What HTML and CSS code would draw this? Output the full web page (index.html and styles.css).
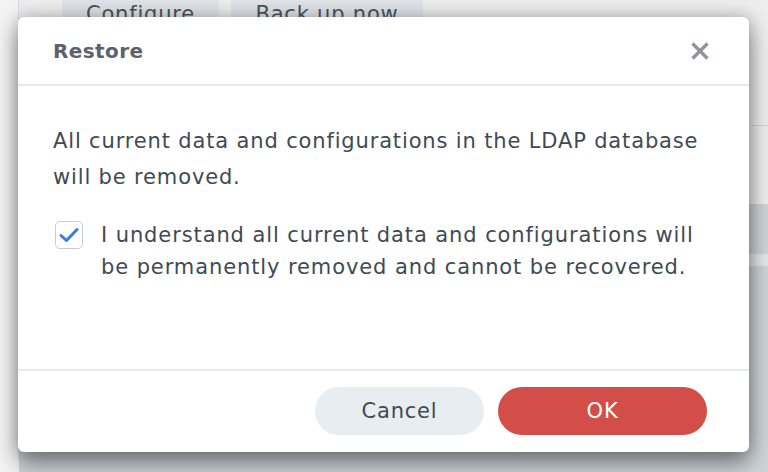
FILE: index.html
```html
<!DOCTYPE html>
<html>
<head>
<meta charset="utf-8">
<link rel="stylesheet" href="styles.css">
</head>
<body>
<div class="page">
  <div class="toolbar">
    <span class="tb-btn tb-configure">Configure</span>
    <span class="tb-btn tb-backup">Back up now</span>
  </div>
  <div class="list">
    <div class="list-gap1"></div>
    <div class="dash-row"></div>
    <div class="list-gap2"></div>
    <div class="row row-a"></div>
    <div class="row row-b"></div>
    <div class="row row-c"></div>
  </div>
</div>

<div class="dialog">
  <div class="dlg-header">
    <span class="dlg-title">Restore</span>
    <svg class="dlg-close" width="20" height="20" viewBox="0 0 20 20">
      <path d="M2.5 2.5 L17.5 17.5 M17.5 2.5 L2.5 17.5" stroke="#8e959c" stroke-width="3.4" stroke-linecap="butt" fill="none"/>
    </svg>
  </div>
  <div class="dlg-body">
    <p class="dlg-text">All current data and configurations in the LDAP database will be removed.</p>
    <div class="check-row">
      <span class="checkbox">
        <svg width="20" height="16" viewBox="0 0 20 16">
          <path d="M2 8.5 L7.5 13.5 L18 2.5" stroke="#3b7ddd" stroke-width="3" stroke-linecap="round" stroke-linejoin="round" fill="none"/>
        </svg>
      </span>
      <span class="check-label">I understand all current data and configurations will be permanently removed and cannot be recovered.</span>
    </div>
  </div>
  <div class="dlg-footer">
    <button class="btn btn-cancel">Cancel</button>
    <button class="btn btn-ok">OK</button>
  </div>
</div>
</body>
</html>
```

FILE: styles.css
```css
html, body {
  margin: 0;
  padding: 0;
}
body {
  width: 768px;
  height: 472px;
  overflow: hidden;
  background: #f3f3f3;
  font-family: "DejaVu Sans", Verdana, sans-serif;
  position: relative;
}
.page {
  margin-left: 18px;
  height: 472px;
  border-left: 1px solid #d8dde3;
  background: #ededed;
}
.toolbar {
  display: flex;
  gap: 12px;
  padding-left: 43px;
  margin-top: -12px;
}
.tb-btn {
  display: block;
  height: 36px;
  line-height: 52px;
  background: #dfe3e7;
  color: #4a525b;
  font-size: 21px;
  letter-spacing: 0.8px;
  border-radius: 3px;
  text-align: center;
  overflow: hidden;
}
.tb-configure { width: 157px; }
.tb-backup { width: 192px; }
.list {
  display: flex;
  flex-direction: column;
}
.list-gap1 { height: 101px; }
.dash-row {
  height: 0;
  border-top: 1px dashed #c3c9cf;
  margin-left: 733px;
}
.list-gap2 { height: 78px; }
.row-a { height: 50px; background: #cdd3d8; }
.row-b { height: 12px; background: #e4e7ea; }
.row-c { height: 220px; background: #cdd3d8; }

.dialog {
  position: absolute;
  left: 18px;
  top: 17px;
  width: 731px;
  height: 435px;
  background: #fff;
  border-radius: 6px;
  box-shadow: 0 12px 22px rgba(0,0,0,0.38), 0 0 18px rgba(0,0,0,0.25);
  display: flex;
  flex-direction: column;
}
.dlg-header {
  height: 69px;
  border-bottom: 2px solid #e6eaef;
  display: flex;
  align-items: center;
  justify-content: space-between;
  padding: 0 39px 0 35px;
  box-sizing: border-box;
}
.dlg-title {
  font-size: 20px;
  font-weight: bold;
  color: #5b626b;
  letter-spacing: 0.4px;
}
.dlg-close {
  display: block;
}
.dlg-body {
  flex: 1;
  padding: 37px 35px 0 35px;
}
.dlg-text {
  margin: 0;
  font-size: 21px;
  line-height: 36px;
  letter-spacing: 0.85px;
  color: #414a54;
}
.check-row {
  display: flex;
  align-items: flex-start;
  margin-top: 24px;
  gap: 18px;
}
.checkbox {
  flex: none;
  width: 28px;
  height: 28px;
  box-sizing: border-box;
  border: 1.5px solid #c7cdd5;
  border-radius: 5px;
  margin: 2px 0 0 2px;
  display: flex;
  align-items: center;
  justify-content: center;
  background: #fff;
}
.checkbox svg { display: block; }
.check-label {
  font-size: 21px;
  line-height: 32px;
  letter-spacing: 0.9px;
  color: #414a54;
  max-width: 606px;
}
.dlg-footer {
  border-top: 2px solid #e6eaef;
  display: flex;
  justify-content: flex-end;
  gap: 14px;
  padding: 16px 42px 17px 0;
}
.btn {
  height: 48px;
  border: none;
  border-radius: 24px;
  font-family: "DejaVu Sans", Verdana, sans-serif;
  font-size: 21px;
  letter-spacing: 0.8px;
  padding: 0;
}
.btn-cancel {
  width: 169px;
  background: #e8edf1;
  color: #414a54;
}
.btn-ok {
  width: 209px;
  background: #d44e49;
  color: #fff;
}
```
